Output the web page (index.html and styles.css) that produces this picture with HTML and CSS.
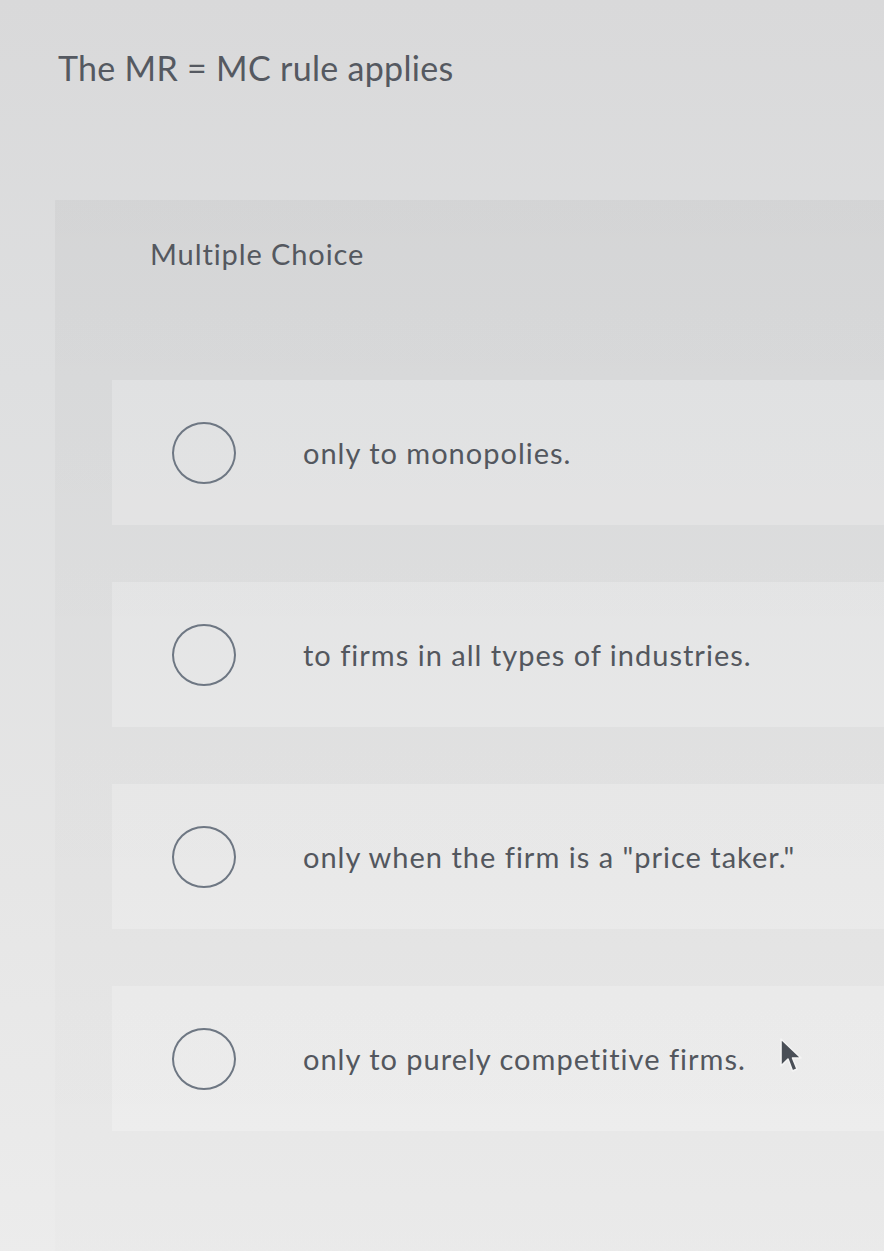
FILE: index.html
```html
<!DOCTYPE html>
<html lang="en">
<head>
<meta charset="utf-8">
<title>The MR = MC rule applies</title>
<link rel="stylesheet" href="styles.css">
</head>
<body>
  <main class="page">
    <h1 class="question">The MR = MC rule applies</h1>
    <section class="panel">
      <h2 class="panel-title">Multiple Choice</h2>
      <ul class="options">
        <li class="option"><span class="radio"></span><span class="label">only to monopolies.</span></li>
        <li class="option"><span class="radio"></span><span class="label">to firms in all types of industries.</span></li>
        <li class="option"><span class="radio"></span><span class="label">only when the firm is a "price taker."</span></li>
        <li class="option"><span class="radio"></span><span class="label">only to purely competitive firms.</span>
          <svg class="cursor" width="26" height="40" viewBox="0 0 26 40" aria-hidden="true">
            <path d="M2 2 L2 29 L9 22 L13.5 34 L18 32 L13.5 21 L22 21 Z" fill="#4a4f57" stroke="#f4f4f4" stroke-width="1.6" stroke-linejoin="round"/>
          </svg>
        </li>
      </ul>
    </section>
  </main>
</body>
</html>
```

FILE: styles.css
```css
html, body {
  margin: 0;
  padding: 0;
}

body {
  width: 884px;
  min-height: 1251px;
  background: linear-gradient(180deg, #d9d9da 0%, #dedfe0 30%, #e6e6e6 70%, #ececec 100%);
  font-family: Lato, "Liberation Sans", sans-serif;
  font-variant-ligatures: none;
  color: #555a61;
  overflow: hidden;
}

.page {
  padding-top: 48px;
}

.question {
  margin: 0 0 112px 58px;
  font-size: 34px;
  line-height: 40px;
  font-weight: 400;
  color: #555961;
  letter-spacing: 0.3px;
}

.panel {
  margin-left: 55px;
  min-height: 1060px;
  background: linear-gradient(180deg, rgba(0,0,0,0.035) 0%, rgba(0,0,0,0.02) 40%, rgba(0,0,0,0.008) 100%);
}

.panel-title {
  margin: 0;
  padding: 36px 0 38px 95px;
  font-size: 29px;
  line-height: 36px;
  font-weight: 400;
  color: #54585f;
  letter-spacing: 0.9px;
}

.options {
  list-style: none;
  margin: 0;
  padding: 70px 0 0 57px;
  display: flex;
  flex-direction: column;
  gap: 57px;
}

.option {
  position: relative;
  height: 145px;
  display: flex;
  align-items: center;
  padding-left: 60px;
  background: rgba(255,255,255,0.22);
}

.radio {
  flex: none;
  width: 60px;
  height: 58px;
  border: 2.5px solid #6e7783;
  border-radius: 50%;
  margin-right: 67px;
}

.label {
  font-size: 29px;
  line-height: 36px;
  color: #53575e;
  letter-spacing: 1px;
}

.cursor {
  position: absolute;
  left: 667px;
  top: 51px;
}
```
